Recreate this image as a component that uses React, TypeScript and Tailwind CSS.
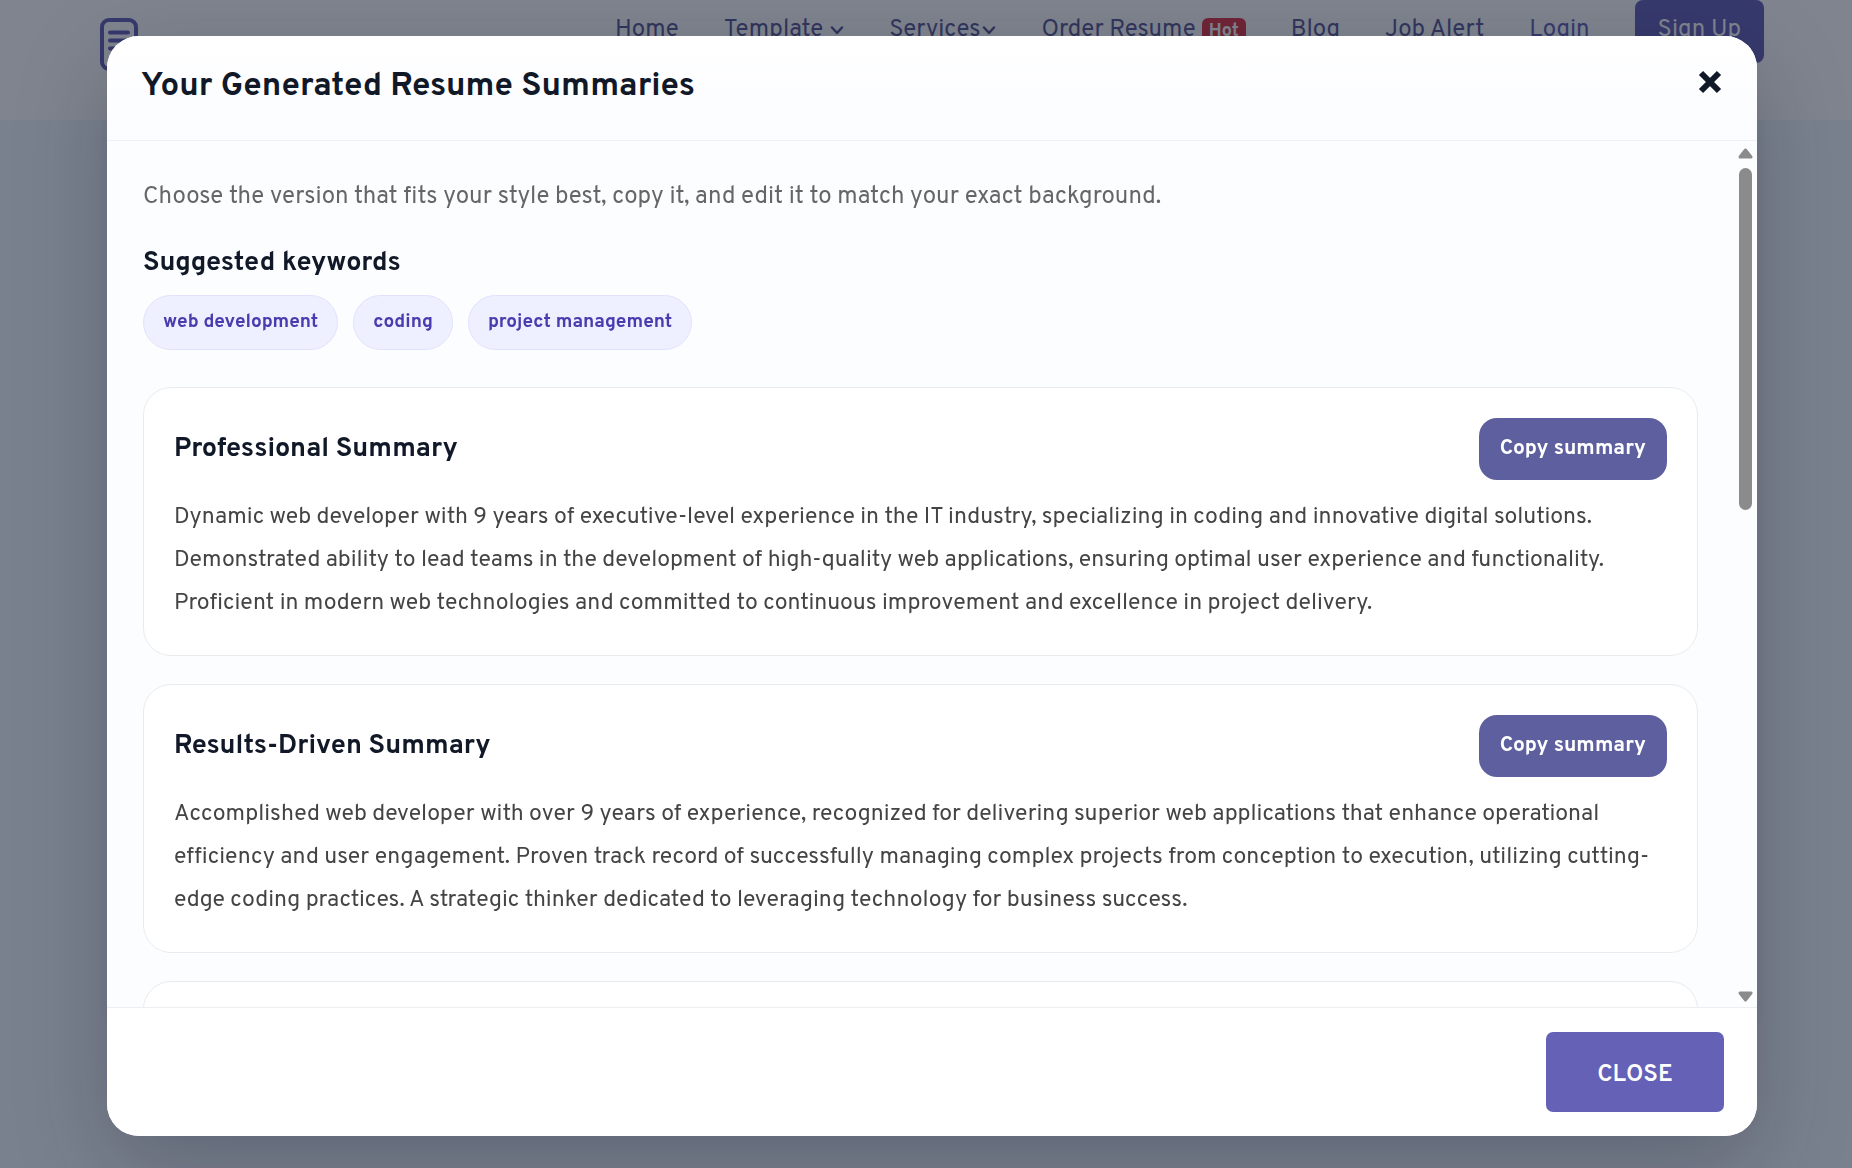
import React from 'react';

const keywords = ['web development', 'coding', 'project management'];

const summaries = [
  {
    title: 'Professional Summary',
    text: 'Dynamic web developer with 9 years of executive-level experience in the IT industry, specializing in coding and innovative digital solutions. Demonstrated ability to lead teams in the development of high-quality web applications, ensuring optimal user experience and functionality. Proficient in modern web technologies and committed to continuous improvement and excellence in project delivery.',
  },
  {
    title: 'Results-Driven Summary',
    text: 'Accomplished web developer with over 9 years of experience, recognized for delivering superior web applications that enhance operational efficiency and user engagement. Proven track record of successfully managing complex projects from conception to execution, utilizing cutting-edge coding practices. A strategic thinker dedicated to leveraging technology for business success.',
  },
];

function Logo() {
  return (
    <svg width="38" height="54" viewBox="0 0 38 54" fill="none" stroke="#6461b7" strokeWidth="4" strokeLinecap="round">
      <rect x="2" y="3" width="34" height="49" rx="7" />
      <path d="M10 15.5h18M10 23.5h18M10 31.5h18" />
    </svg>
  );
}

function Chevron() {
  return (
    <svg width="14" height="9" viewBox="0 0 14 9" fill="none" stroke="currentColor" strokeWidth="2.5" strokeLinecap="round" strokeLinejoin="round">
      <path d="M2 1.5l5 5.5 5-5.5" />
    </svg>
  );
}

function Navbar() {
  return (
    <header className="flex h-[120px] items-start justify-between bg-white pl-[100px] pr-[88px]">
      <a href="#" aria-label="Resume home" className="pt-[17px]">
        <Logo />
      </a>
      <nav className="flex items-start gap-[45px] text-2xl leading-[60px] text-[#5a5896]">
        <a href="#">Home</a>
        <a href="#" className="flex items-center gap-[7px]">
          Template <Chevron />
        </a>
        <a href="#" className="flex items-center gap-0.5">
          Services <Chevron />
        </a>
        <a href="#" className="flex items-center gap-1.5">
          Order Resume
          <span className="mt-0.5 rounded-md bg-[#dc3545] px-[7px] pt-0.5 text-lg font-bold leading-6 text-white">Hot</span>
        </a>
        <a href="#">Blog</a>
        <a href="#">Job Alert</a>
        <a href="#" className="text-[#6461b7]">Login</a>
        <a href="#" className="h-[63px] rounded-lg bg-[#6461b7] px-[23px] text-white">Sign Up</a>
      </nav>
    </header>
  );
}

function SummaryCard({ title, text }: { title: string; text: string }) {
  return (
    <article className="rounded-[28px] border border-[#e8eaee] bg-white p-[30px]">
      <div className="mb-4 flex items-center justify-between">
        <h3 className="text-[27px] font-bold leading-8 text-[#111827]">{title}</h3>
        <button type="button" className="h-[62px] rounded-[18px] bg-[#5e5f9f] px-[21px] text-[21px] font-bold text-white">
          Copy summary
        </button>
      </div>
      <p className="text-[23px] leading-[43px] text-[#444]">{text}</p>
    </article>
  );
}

function ScrollTrack() {
  return (
    <div aria-hidden="true" className="flex w-[23px] shrink-0 flex-col items-center pt-[7px] pb-[5px]">
      <svg width="15" height="11" viewBox="0 0 15 11" fill="#8b8b8b" stroke="#8b8b8b" strokeWidth="3" strokeLinejoin="round">
        <path d="M7.5 2 13 9h-11Z" />
      </svg>
      <div className="mt-[9px] h-[40%] w-[13px] rounded-full bg-[#8b8b8b]" />
      <svg className="mt-auto" width="15" height="11" viewBox="0 0 15 11" fill="#8b8b8b" stroke="#8b8b8b" strokeWidth="3" strokeLinejoin="round">
        <path d="M7.5 9 13 2h-11Z" />
      </svg>
    </div>
  );
}

export default function App() {
  return (
    <div className="h-screen overflow-hidden bg-[#f2f8ff] font-['Overpass','Roboto',sans-serif]">
      <Navbar />

      {/* Page panel that sits behind the dialog */}
      <main className="mr-[88px] ml-[101px] h-[calc(100vh-252px)] rounded-b-[28px] bg-[#edf3fb]" />

      <div className="fixed inset-0 flex bg-[#0f172a]/53 pt-9 pr-[95px] pb-8 pl-[107px]">
        <section
          role="dialog"
          aria-modal="true"
          aria-labelledby="dialog-title"
          className="flex min-w-0 flex-1 flex-col overflow-hidden rounded-[32px] bg-white shadow-[0_30px_90px_rgba(15,23,42,0.25)]"
        >
          <header className="flex h-[105px] shrink-0 items-start justify-between border-b border-[#eef0f4] bg-linear-to-b from-white to-[#fbfcff] pt-[31px] pr-[34px] pl-[34px]">
            <h2 id="dialog-title" className="text-[33px] font-bold leading-10 text-[#111827]">
              Your Generated Resume Summaries
            </h2>
            <button type="button" aria-label="Close dialog" className="pt-[3px]">
              <svg width="26" height="24" viewBox="0 0 26 24" fill="none" stroke="#111827" strokeWidth="6">
                <path d="M4 3l18 18M22 3L4 21" />
              </svg>
            </button>
          </header>

          <div className="flex min-h-0 flex-1 bg-[#fbfdff]">
            <div className="min-w-0 flex-1 overflow-y-auto pt-[35px] pr-9 pl-9 [scrollbar-width:none]">
              <p className="text-2xl leading-[43px] text-[#666]">
                Choose the version that fits your style best, copy it, and edit it to match your exact background.
              </p>
              <h3 className="mt-7 text-[27px] font-bold leading-8 text-[#111827]">Suggested keywords</h3>
              <ul className="mt-4 mb-[37px] flex flex-wrap gap-[15px]">
                {keywords.map((word) => (
                  <li
                    key={word}
                    className="rounded-full border border-[#e0e2fb] bg-[#eef0ff] px-[19px] pt-[11px] pb-3 text-[19px] font-bold leading-[30px] text-[#4a3cae]"
                  >
                    {word}
                  </li>
                ))}
              </ul>
              <div className="flex flex-col gap-7">
                {summaries.map((item) => (
                  <SummaryCard key={item.title} title={item.title} text={item.text} />
                ))}
                <div className="h-64 rounded-[28px] border border-[#e8eaee] bg-white" />
              </div>
            </div>
            <ScrollTrack />
          </div>

          <footer className="flex shrink-0 justify-end border-t border-[#eceef2] bg-white pt-6 pr-[33px] pb-6">
            <button type="button" className="h-20 w-[178px] rounded-[7px] bg-[#6461b7] pt-1.5 text-2xl font-semibold text-white">
              CLOSE
            </button>
          </footer>
        </section>
      </div>
    </div>
  );
}
